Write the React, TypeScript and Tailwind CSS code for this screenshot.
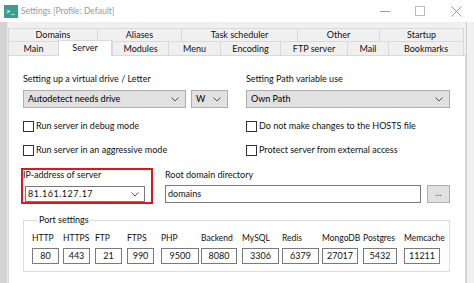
import React from "react";

const font = { fontFamily: 'Lato, "Noto Sans", sans-serif' };

function Chevron() {
  return (
    <svg width="8" height="5" viewBox="0 0 8 5" className="shrink-0">
      <path d="M0.5 0.5 L4 4 L7.5 0.5" fill="none" stroke="#555" strokeWidth="1" />
    </svg>
  );
}

function Select({ value, className }: { value: string; className: string }) {
  return (
    <div
      className={`flex items-center justify-between border border-[#adadad] bg-[#e1e1e1] pl-[4px] pr-[6px] text-black ${className}`}
    >
      <span>{value}</span>
      <Chevron />
    </div>
  );
}

function Check({ label }: { label: string }) {
  return (
    <div className="flex h-[12px] items-center gap-[2px]">
      <span className="h-[11px] w-[11px] shrink-0 border border-[#333] bg-white" />
      <span className="whitespace-nowrap">{label}</span>
    </div>
  );
}

const row1 = [
  ["Domains", 89],
  ["Aliases", 84],
  ["Task scheduler", 116],
  ["Other", 82],
  ["Startup", 85],
] as const;

const row2 = [
  ["Main", 50],
  ["Server", 54],
  ["Modules", 56],
  ["Menu", 52],
  ["Encoding", 60],
  ["FTP server", 67],
  ["Mail", 41],
  ["Bookmarks", 76],
] as const;

const ports = [
  ["HTTP", "80", 31, 27],
  ["HTTPS", "443", 32, 27],
  ["FTP", "21", 32, 27],
  ["FTPS", "990", 34, 27],
  ["PHP", "9500", 40, 38],
  ["Backend", "8080", 41, 36],
  ["MySQL", "3306", 40, 37],
  ["Redis", "6379", 40, 37],
  ["MongoDB", "27017", 41, 36],
  ["Postgres", "5432", 41, 34],
  ["Memcache", "11211", 36, 36],
] as const;

export default function App() {
  return (
    <div className="h-[283px] w-[474px] overflow-hidden bg-[#f0f0f0] text-[9px] leading-[12px] text-[#111]" style={font}>
      {/* title bar */}
      <div className="flex h-[22px] items-center bg-white">
        <div className="ml-[4px] flex h-[13px] w-[14px] items-center bg-[#3a9f93] pl-[2px]">
          <span className="text-[8px] font-bold leading-none text-white">&gt;_</span>
        </div>
        <span className="ml-[3px] text-[8.5px] text-[#9a9a9a]">Settings [Profile: Default]</span>
        <div className="ml-auto flex h-full items-center">
          <svg width="10" height="10" viewBox="0 0 10 10" className="mr-[25px]">
            <path d="M0 5.5 H10" stroke="#999" strokeWidth="1" />
          </svg>
          <svg width="10" height="10" viewBox="0 0 10 10" className="mr-[26px]">
            <rect x="0.5" y="0.5" width="9" height="9" fill="none" stroke="#bbb" strokeWidth="1" />
          </svg>
          <svg width="11" height="11" viewBox="0 0 11 11" className="mr-[12px]">
            <path d="M0.5 0.5 L10.5 10.5 M10.5 0.5 L0.5 10.5" stroke="#999" strokeWidth="1" />
          </svg>
        </div>
      </div>

      <div className="flex h-[261px]">
        <div className="w-[8px] shrink-0 border-r border-[#e8e8e8] bg-[#d4d4d4]" />
        <div className="flex w-[458px] flex-col pt-[6px]">
          {/* tabs */}
          <div className="flex h-[13px]">
            {row1.map(([t, w]) => (
              <div
                key={t}
                style={{ width: w }}
                className="flex items-center justify-center border-l border-t border-[#d9d9d9] last:border-r"
              >
                {t}
              </div>
            ))}
          </div>
          <div className="relative z-10 flex h-[14px]">
            {row2.map(([t, w]) =>
              t === "Server" ? (
                <div
                  key={t}
                  style={{ width: w }}
                  className="-mt-[1px] flex h-[16px] items-center justify-center border-x border-t border-[#d9d9d9] bg-white pb-[1px]"
                >
                  {t}
                </div>
              ) : (
                <div
                  key={t}
                  style={{ width: w }}
                  className="flex items-center justify-center border-l border-t border-[#d9d9d9] last:border-r"
                >
                  {t}
                </div>
              ),
            )}
          </div>

          {/* page */}
          <div className="flex flex-1 flex-col border border-b-0 border-[#d9d9d9] bg-white pl-[14px] pt-[17px]">
            <div className="flex gap-[18px]">
              <div className="flex w-[205px] flex-col">
                <span>Setting up a virtual drive / Letter</span>
                <div className="mt-[5px] flex gap-[5px]">
                  <Select value="Autodetect needs drive" className="h-[18px] w-[163px]" />
                  <Select value="W" className="h-[18px] w-[37px]" />
                </div>
                <div className="mt-[12px] flex flex-col gap-[12px]">
                  <Check label="Run server in debug mode" />
                  <Check label="Run server in an aggressive mode" />
                </div>
              </div>
              <div className="flex w-[204px] flex-col">
                <span>Setting Path variable use</span>
                <div className="mt-[5px] flex">
                  <Select value="Own Path" className="h-[18px] w-[204px]" />
                </div>
                <div className="mt-[12px] flex flex-col gap-[12px]">
                  <Check label="Do not make changes to the HOSTS file" />
                  <Check label="Protect server from external access" />
                </div>
              </div>
            </div>

            <div className="mt-[12px] flex items-start">
              <div className="-ml-[2px] flex h-[36px] w-[132px] flex-col border-2 border-[#e3131b]">
                <span className="-mt-[1px]">IP-address of server</span>
                <div className="ml-[2px] mt-[5px] flex h-[16px] w-[120px] items-center justify-between border border-[#7a7a7a] bg-white pl-[2px] pr-[5px]">
                  <span className="tracking-[0.5px]">81.161.127.17</span>
                  <Chevron />
                </div>
              </div>
              <div className="ml-[12px] flex flex-col pt-[1px]">
                <span>Root domain directory</span>
                <div className="mt-[4px] flex gap-[6px]">
                  <div className="flex h-[18px] w-[256px] items-center border border-[#7a7a7a] pl-[2px]">domains</div>
                  <div className="flex h-[18px] w-[23px] items-center justify-center border border-[#adadad] bg-[#e1e1e1] pb-[3px] text-[#555]">
                    ...
                  </div>
                </div>
              </div>
            </div>

            <fieldset className="mt-[10px] h-[58px] w-[427px] border border-[#dcdcdc] pl-[8px]">
              <legend className="ml-[6px] px-[1px]">Port settings</legend>
              <div className="mt-[6px] flex">
                {ports.map(([name, val, cw, iw]) => (
                  <div key={name} style={{ width: cw }} className="flex shrink-0 flex-col">
                    <span className="whitespace-nowrap text-[8.5px]">{name}</span>
                    <div
                      style={{ width: iw }}
                      className="mt-[4px] flex h-[16px] items-center justify-center border border-[#7a7a7a]"
                    >
                      {val}
                    </div>
                  </div>
                ))}
              </div>
            </fieldset>
          </div>
        </div>
        <div className="flex-1 border-l border-[#cfcfcf] bg-[#f0f0f0]" />
      </div>
    </div>
  );
}
